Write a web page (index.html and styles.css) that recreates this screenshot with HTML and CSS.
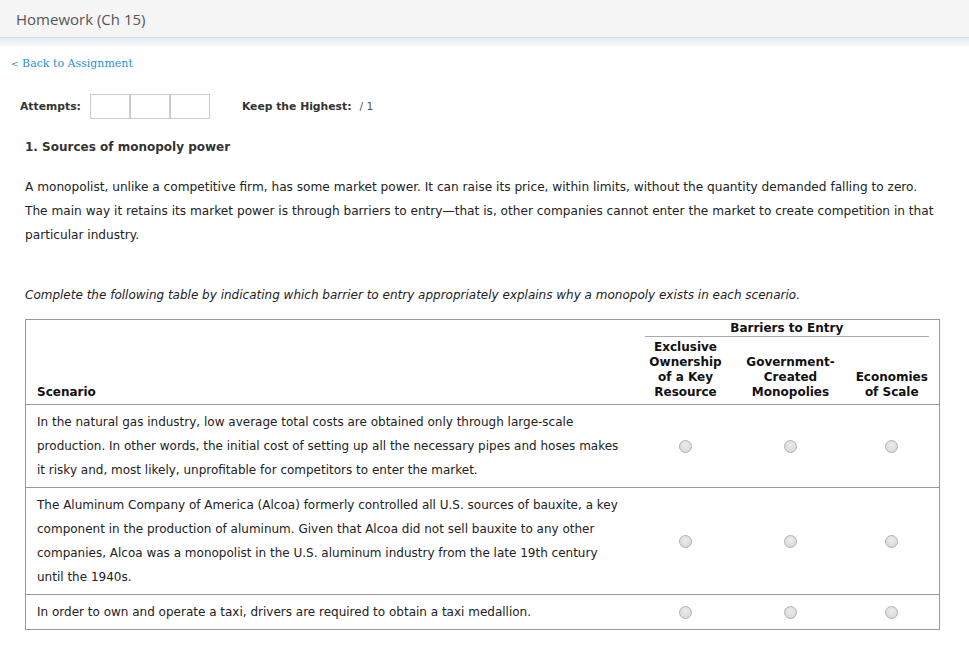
FILE: index.html
```html
<!DOCTYPE html>
<html>
<head>
<meta charset="utf-8">
<link rel="stylesheet" href="styles.css">
</head>
<body>
<header class="topbar"><span class="title">Homework (Ch 15)</span></header>
<div class="shade"></div>
<main class="page">
  <a class="back" href="#"><span class="lt">&lt;</span> Back to Assignment</a>
  <div class="attempts">
    <span class="label">Attempts:</span>
    <div class="boxes"><span class="box"></span><span class="box"></span><span class="box"></span></div>
    <span class="label keep">Keep the Highest:</span>
    <span class="score">/ 1</span>
  </div>
  <section class="question">
    <h2 class="qtitle">1. Sources of monopoly power</h2>
    <p class="intro">A monopolist, unlike a competitive firm, has some market power. It can raise its price, within limits, without the quantity demanded falling to zero. The main way it retains its market power is through barriers to entry—that is, other companies cannot enter the market to create competition in that particular industry.</p>
    <p class="instr">Complete the following table by indicating which barrier to entry appropriately explains why a monopoly exists in each scenario.</p>
    <table class="grid">
      <colgroup><col class="c0"><col class="c1"><col class="c2"><col class="c3"></colgroup>
      <thead>
        <tr class="grp"><th rowspan="2" class="scen">Scenario</th><th colspan="3"><div class="grpline">Barriers to Entry</div></th></tr>
        <tr class="opts"><th>Exclusive<br>Ownership<br>of a Key<br>Resource</th><th>Government-<br>Created<br>Monopolies</th><th>Economies<br>of Scale</th></tr>
      </thead>
      <tbody>
        <tr><td class="txt">In the natural gas industry, low average total costs are obtained only through large-scale production. In other words, the initial cost of setting up all the necessary pipes and hoses makes it risky and, most likely, unprofitable for competitors to enter the market.</td><td><span class="radio"></span></td><td><span class="radio"></span></td><td><span class="radio"></span></td></tr>
        <tr><td class="txt">The Aluminum Company of America (Alcoa) formerly controlled all U.S. sources of bauxite, a key component in the production of aluminum. Given that Alcoa did not sell bauxite to any other companies, Alcoa was a monopolist in the U.S. aluminum industry from the late 19th century until the 1940s.</td><td><span class="radio"></span></td><td><span class="radio"></span></td><td><span class="radio"></span></td></tr>
        <tr><td class="txt">In order to own and operate a taxi, drivers are required to obtain a taxi medallion.</td><td><span class="radio"></span></td><td><span class="radio"></span></td><td><span class="radio"></span></td></tr>
      </tbody>
    </table>
  </section>
</main>
</body>
</html>
```

FILE: styles.css
```css
html, body { margin: 0; padding: 0; background: #fff; }
body { font-family: "DejaVu Sans", Verdana, sans-serif; color: #222; }

.topbar {
  height: 37px;
  background: #f5f5f5;
  border-bottom: 1px solid #dcdcdc;
  display: flex;
  align-items: center;
  padding-left: 16px;
  box-sizing: content-box;
}
.title { font-family: "Open Sans", sans-serif; font-size: 15px; color: #555; }
.shade { height: 9px; background: linear-gradient(#e6ecef, #fafbfc); }

.page { padding: 0; }
.back {
  display: block;
  margin: 10px 0 0 11px;
  font-family: "DejaVu Serif", "Liberation Serif", serif;
  font-size: 11px;
  color: #2a8fd0;
  text-decoration: none;
  line-height: 14px;
}
.back .lt { font-family: "DejaVu Sans", sans-serif; font-size: 9px; }

.attempts {
  display: flex;
  align-items: center;
  margin: 23px 0 0 20px;
  height: 25px;
}
.label { font-size: 10.8px; font-weight: bold; color: #333; }
.boxes { display: flex; margin-left: 9px; }
.box { width: 38px; height: 23px; border: 1px solid #ccc; }
.keep { margin-left: 32px; }
.score { font-size: 10.8px; color: #555; margin-left: 8px; }

.question { padding-left: 25px; }
.qtitle { font-size: 12px; font-weight: bold; color: #333; margin: 21px 0 0; line-height: 15px; }
.intro { font-size: 12.15px; line-height: 24px; margin: 20px 30px 0 0; color: #222; }
.instr { font-size: 12px; font-style: italic; line-height: 16px; margin: 40px 0 0; color: #222; }

.grid {
  margin-top: 16px;
  width: 914px;
  border-collapse: collapse;
  border: 1px solid #999;
  font-size: 12px;
  table-layout: fixed;
}
.c0 { width: 609px; }
.c1 { width: 102px; }
.c2 { width: 108px; }
.c3 { width: 95px; }
.grid th { font-weight: bold; color: #111; font-size: 12px; line-height: 15px; padding: 0; vertical-align: bottom; }
.grp th { padding-top: 1px; }
.grpline { margin: 0 10px; border-bottom: 1px solid #aaa; line-height: 15px; }
.opts th { padding: 3px 0 4px; text-align: center; border-bottom: 1px solid #999; }
.scen { text-align: left; padding: 0 0 4px 11px !important; border-bottom: 1px solid #999; }
.grid td { border-top: 1px solid #999; text-align: center; vertical-align: middle; padding: 0; }
.grid td.txt { text-align: left; padding: 5px 10px 5px 11px; line-height: 24px; color: #222; }
.radio {
  display: inline-block;
  width: 11px; height: 11px;
  border-radius: 50%;
  border: 1px solid #b3b3b3;
  background: radial-gradient(circle at 50% 35%, #ececec, #d4d4d4);
  vertical-align: middle;
}
```
